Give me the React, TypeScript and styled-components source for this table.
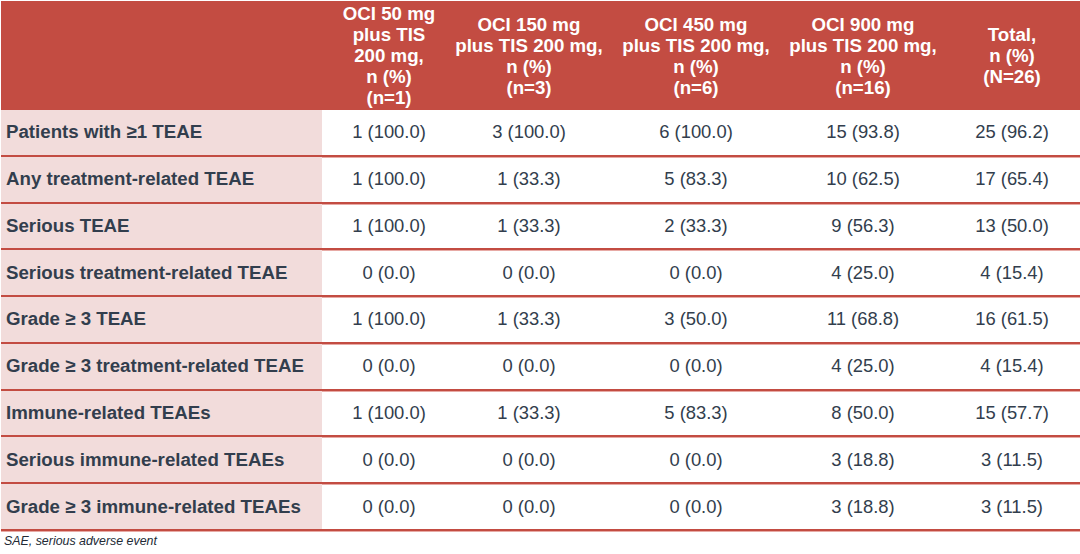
import React from "react";
import styled, { createGlobalStyle } from "styled-components";

const GlobalStyle = createGlobalStyle`
  html, body { margin: 0; padding: 0; background: #ffffff; }
  body { font-family: "Liberation Sans", Arial, sans-serif; }
`;

const RED = "#c34c42";
const PINK = "#f2dcdb";
const TEXT = "#323e4d";
const COLS = "321px 134px 146px 188px 146px 143px";

const Page = styled.div`
  padding: 1px 0 0 1px;
  width: 1079px;
`;

const Table = styled.div`
  display: flex;
  flex-direction: column;
`;

const HeaderRow = styled.div`
  display: grid;
  grid-template-columns: ${COLS};
  height: 109px;
  background: ${RED};
`;

const HeadCell = styled.div<{ $shift?: number }>`
  display: flex;
  align-items: center;
  justify-content: center;
  text-align: center;
  color: #ffffff;
  font-weight: 700;
  font-size: 18.7px;
  line-height: 21px;
  white-space: nowrap;
  min-width: 0;
  padding-left: ${(p) => (p.$shift ?? 0) * 2}px;
`;

const Row = styled.div`
  display: grid;
  grid-template-columns: ${COLS};
  height: 46.78px;
  box-sizing: border-box;
  border-bottom: 2px solid ${RED};
  box-shadow: 0 1px 0 #e7aaa5;
`;

const Label = styled.div`
  display: flex;
  align-items: center;
  background: ${PINK};
  padding-left: 5px;
  color: ${TEXT};
  font-weight: 700;
  font-size: 18.7px;
  white-space: nowrap;
`;

const Value = styled.div<{ $shift?: number }>`
  display: flex;
  align-items: center;
  justify-content: center;
  color: ${TEXT};
  font-size: 18.4px;
  padding-left: ${(p) => (p.$shift ?? 0) * 2}px;
  white-space: nowrap;
`;

const Footnote = styled.div`
  font-style: italic;
  font-size: 12.4px;
  color: #222a35;
  padding: 3px 0 0 3px;
`;

const headers: string[][] = [
  ["OCI 50 mg", "plus TIS", "200 mg,", "n (%)", "(n=1)"],
  ["OCI 150 mg", "plus TIS 200 mg,", "n (%)", "(n=3)"],
  ["OCI 450 mg", "plus TIS 200 mg,", "n (%)", "(n=6)"],
  ["OCI 900 mg", "plus TIS 200 mg,", "n (%)", "(n=16)"],
  ["Total,", "n (%)", "(N=26)"],
];

const shifts = [0, 0, 0, 0, 4.5];

const rows: [string, string[]][] = [
  ["Patients with ≥1 TEAE", ["1 (100.0)", "3 (100.0)", "6 (100.0)", "15 (93.8)", "25 (96.2)"]],
  ["Any treatment-related TEAE", ["1 (100.0)", "1 (33.3)", "5 (83.3)", "10 (62.5)", "17 (65.4)"]],
  ["Serious TEAE", ["1 (100.0)", "1 (33.3)", "2 (33.3)", "9 (56.3)", "13 (50.0)"]],
  ["Serious treatment-related TEAE", ["0 (0.0)", "0 (0.0)", "0 (0.0)", "4 (25.0)", "4 (15.4)"]],
  ["Grade ≥ 3 TEAE", ["1 (100.0)", "1 (33.3)", "3 (50.0)", "11 (68.8)", "16 (61.5)"]],
  ["Grade ≥ 3 treatment-related TEAE", ["0 (0.0)", "0 (0.0)", "0 (0.0)", "4 (25.0)", "4 (15.4)"]],
  ["Immune-related TEAEs", ["1 (100.0)", "1 (33.3)", "5 (83.3)", "8 (50.0)", "15 (57.7)"]],
  ["Serious immune-related TEAEs", ["0 (0.0)", "0 (0.0)", "0 (0.0)", "3 (18.8)", "3 (11.5)"]],
  ["Grade ≥ 3 immune-related TEAEs", ["0 (0.0)", "0 (0.0)", "0 (0.0)", "3 (18.8)", "3 (11.5)"]],
];

export default function App() {
  return (
    <Page>
      <GlobalStyle />
      <Table>
        <HeaderRow>
          <HeadCell />
          {headers.map((lines, i) => (
            <HeadCell key={i} $shift={shifts[i]}>
              <div>
                {lines.map((l, j) => (
                  <div key={j}>{l}</div>
                ))}
              </div>
            </HeadCell>
          ))}
        </HeaderRow>
        {rows.map(([label, vals]) => (
          <Row key={label}>
            <Label>{label}</Label>
            {vals.map((v, i) => (
              <Value key={i} $shift={shifts[i]}>
                {v}
              </Value>
            ))}
          </Row>
        ))}
      </Table>
      <Footnote>SAE, serious adverse event</Footnote>
    </Page>
  );
}
